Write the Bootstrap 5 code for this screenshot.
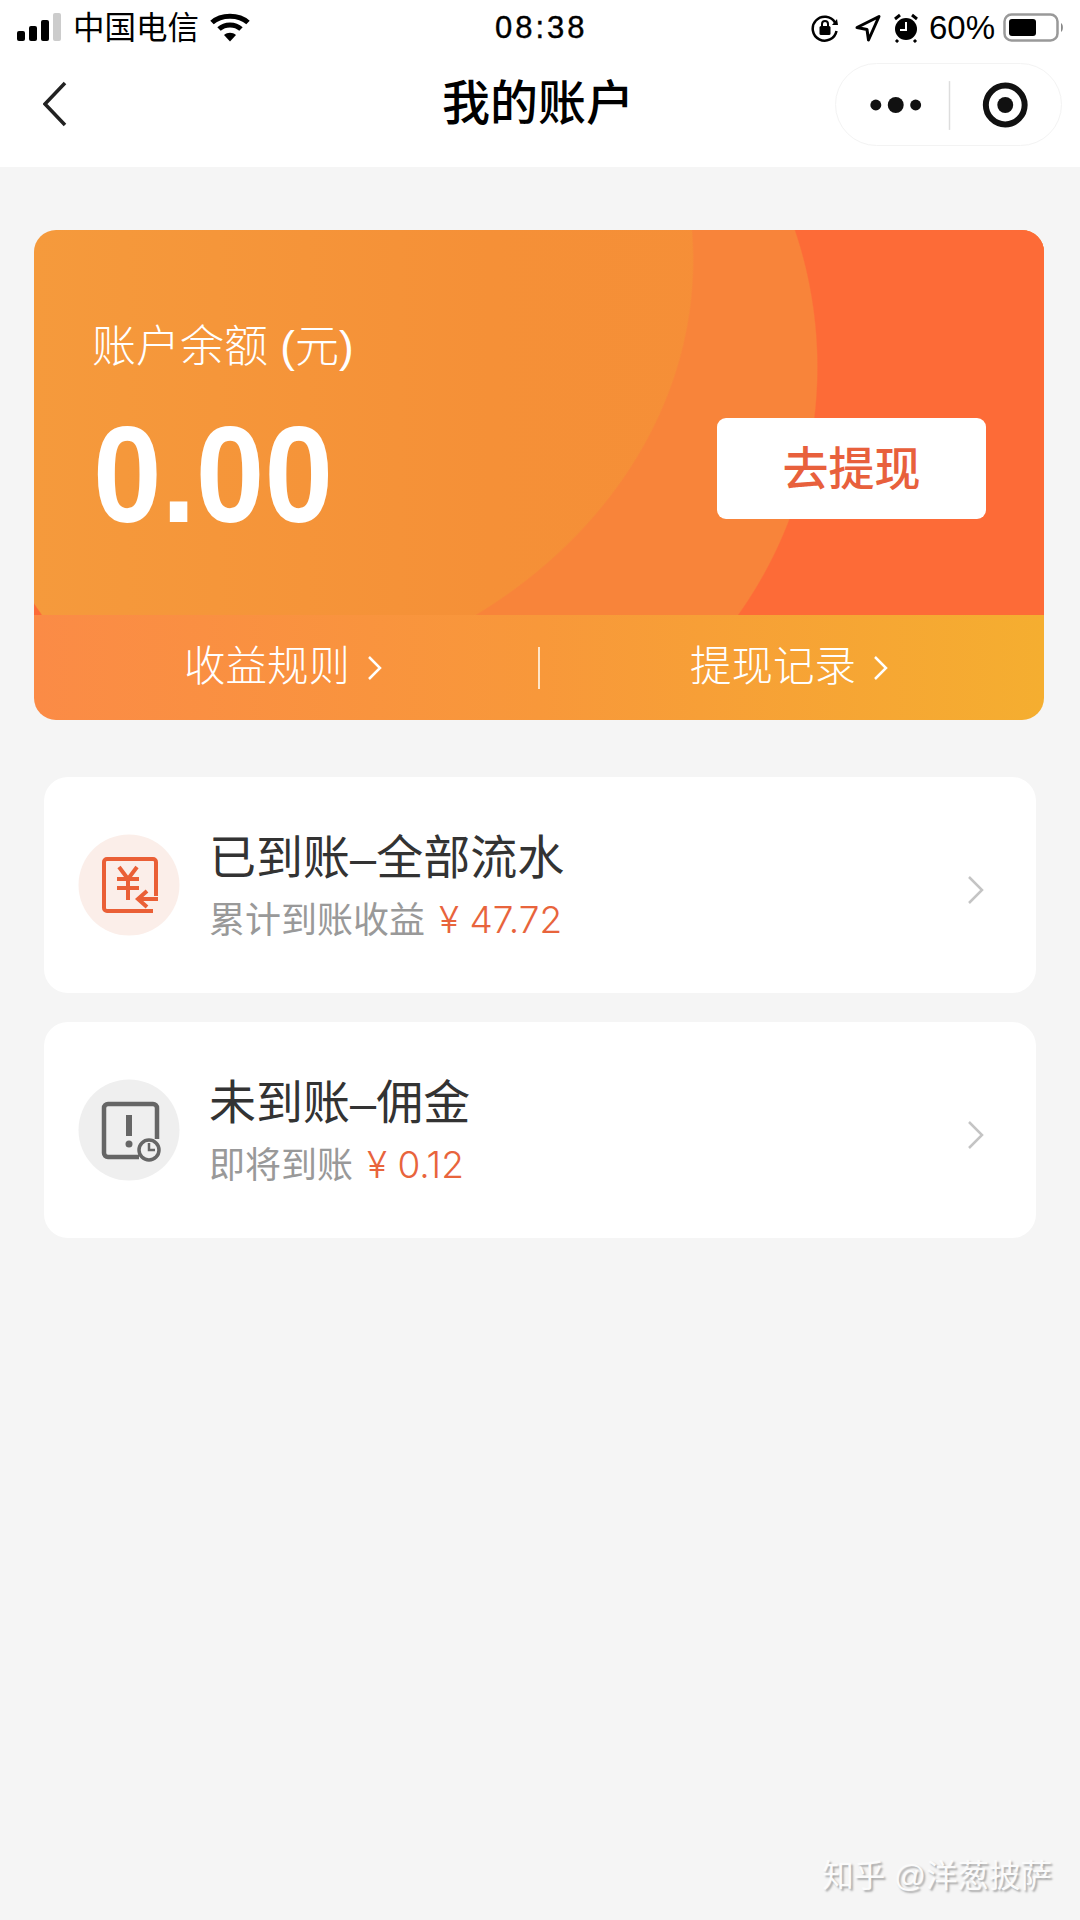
<!DOCTYPE html>
<html lang="zh">
  <head>
    <meta charset="UTF-8" />
    <meta name="viewport" content="width=device-width, initial-scale=1.0" />
    <title>我的账户</title>
    <link
      rel="stylesheet"
      href="https://cdn.jsdelivr.net/npm/bootstrap@5.3.0/dist/css/bootstrap.min.css"
    />
    <style>
      body {
        font-family: "Liberation Sans", "Noto Sans CJK SC", sans-serif;
        background-color: #f5f5f5;
        color: #333;
      }
      .page-wrap {
        width: 1080px;
        height: 1920px;
        overflow: hidden;
      }
      .top-area {
        height: 167px;
        background: #fff;
        color: #000;
      }
      .status-bar {
        height: 56px;
        padding: 0 15px 0 17px;
        font-size: 31px;
        line-height: 56px;
      }
      .status-time {
        width: 92px;
        font-size: 31px;
        letter-spacing: 3px;
        font-weight: 500;
        -webkit-text-stroke: 0.4px #000;
      }
      .status-side {
        width: 400px;
      }
      .carrier-name {
        margin-left: 11px;
        font-size: 31.500px;
      }
      .wifi-mark {
        margin-left: 11px;
      }
      .battery-text {
        margin-left: 10px;
        font-size: 33px;
      }
      .nav-row {
        height: 111px;
        padding: 7px 18px 22px 43px;
      }
      .nav-title {
        font-size: 48px;
        line-height: 82px;
        font-weight: 500;
      }
      .capsule {
        width: 227px;
        height: 83px;
        border: 1px solid #f3f3f3;
        border-radius: 42px;
      }
      .nav-left {
        width: 399px;
      }
      .nav-right {
        width: 428px;
      }
      .balance-card {
        width: 1010px;
        height: 490px;
        margin: 63px 0 0 34px;
        border-radius: 22px;
        overflow: hidden;
      }
      .balance-top {
        height: 385px;
        padding: 0 58px 0 58px;
        color: #fff;
        background:
          radial-gradient(circle 428px at 356px 137px, transparent 99.7%, #fd6b37 100%),
          radial-gradient(ellipse 530px 440px at 130px 30px, transparent 99.7%, #f8843a 100%),
          linear-gradient(90deg, #f59a3c, #f59037 45%, #f68d38);
      }
      .balance-label {
        font-size: 44px;
        line-height: 50px;
        font-weight: 300;
        padding-top: 92px;
      }
      .balance-num {
        font-size: 137px;
        line-height: 130px;
        font-weight: 700;
        margin-top: 38px;
        margin-left: 1px;
        transform: scaleX(0.9);
        transform-origin: left center;
      }
      .withdraw-btn {
        width: 269px;
        height: 101px;
        margin-top: 188px;
        border-radius: 9px;
        background: #fff;
        color: #e8603c;
        font-size: 46px;
        line-height: 103px;
        font-weight: 500;
        text-align: center;
      }
      .balance-links {
        height: 105px;
        color: #fff;
        font-size: 41.500px;
        font-weight: 300;
        background: linear-gradient(90deg, #fb8b46, #f8983a 50%, #f5ae30);
      }
      .link-half {
        width: 50%;
        gap: 17px;
        padding-right: 6px;
      }
      .link-sep {
        width: 2px;
        height: 42px;
        background: #ffe6c8;
        flex: none;
      }
      .flow-card {
        width: 992px;
        height: 216px;
        margin-left: 44px;
        padding: 0 52px 0 34px;
        background: #fff;
        border-radius: 24px;
      }
      .flow-first {
        margin-top: 57px;
      }
      .flow-second {
        margin-top: 29px;
      }
      .flow-icon {
        width: 102px;
        height: 102px;
        flex: none;
      }
      .flow-text {
        margin-left: 29px;
      }
      .flow-title {
        font-size: 47px;
        line-height: 56px;
        color: #333;
      }
      .flow-sub {
        font-size: 36px;
        line-height: 46px;
        color: #999;
        margin-top: 11px;
        margin-bottom: -4px;
      }
      .flow-amount {
        font-family: Inter, "Liberation Sans", sans-serif;
        font-size: 37px;
        font-weight: 300;
        color: #e8643c;
        margin-left: 14px;
      }
      .flow-arrow {
        margin-top: 10px;
      }
      .watermark {
        margin-top: auto;
        padding: 0 28px 26px 0;
        font-size: 31.500px;
        line-height: 36px;
        color: #fbfbfb;
        text-shadow: 2px 2px 2px #aaa;
      }
    </style>
  </head>
  <body class="m-0">
    <div class="page-wrap d-flex flex-column">
      <div class="top-area">
        <div class="status-bar d-flex justify-content-between align-items-center">
          <div class="status-side d-flex align-items-center">
            <svg width="45" height="30" viewBox="0 0 45 30">
              <rect x="0" y="18" width="8" height="10" rx="2" fill="#000" />
              <rect x="12" y="13" width="8" height="15" rx="2" fill="#000" />
              <rect x="24" y="7" width="8" height="21" rx="2" fill="#000" />
              <rect x="36" y="0" width="8" height="28" rx="2" fill="#ccc" />
            </svg>
            <span class="carrier-name">中国电信</span>
            <svg class="wifi-mark" width="40" height="30" viewBox="0 0 40 30">
              <path d="M2 9.500C11 1 29 1 38 9.500" fill="none" stroke="#000" stroke-width="5" />
              <path d="M9 16c6-5.500 16-5.500 22 0" fill="none" stroke="#000" stroke-width="5" />
              <path d="M14 22c3.500-3 8.500-3 12 0l-6 6.500z" fill="#000" />
            </svg>
          </div>
          <div class="status-time text-center">08:38</div>
          <div class="status-side d-flex align-items-center justify-content-end">
            <svg width="28" height="30" viewBox="0 0 28 30">
              <path d="M24 9.500A12 12 0 1 0 25.500 18" fill="none" stroke="#000" stroke-width="2.500" />
              <path d="M21 12l6 0-1-6z" fill="#000" />
              <rect x="8.500" y="13" width="11" height="9" rx="1.500" fill="#000" />
              <path d="M11 13v-2a3 3 0 0 1 6 0v2" fill="none" stroke="#000" stroke-width="2" />
            </svg>
            <svg class="ms-3" width="26" height="30" viewBox="0 0 26 30">
              <path d="M24 3.500L13.500 27l-1.500-10.500L2 14.500z" fill="none" stroke="#000" stroke-width="3" stroke-linejoin="round" />
            </svg>
            <svg class="ms-2 ps-1" width="30" height="30" viewBox="0 0 26 30">
              <circle cx="13" cy="16" r="11" fill="#000" />
              <path d="M13 9v8H7" fill="none" stroke="#fff" stroke-width="2" />
              <path d="M2 6l5-4M24 6l-5-4M5 27l-2 2M21 27l2 2" stroke="#000" stroke-width="3" />
            </svg>
            <span class="battery-text">60%</span>
            <svg class="ms-2" width="62" height="30" viewBox="0 0 62 30">
              <rect x="1.500" y="1.500" width="53" height="26" rx="7" fill="none" stroke="#999" stroke-width="2.500" />
              <rect x="6" y="6" width="27" height="17" rx="3" fill="#000" />
              <path d="M58 10c2.500 1 2.500 8 0 9z" fill="#888" />
            </svg>
          </div>
        </div>
        <div class="nav-row d-flex justify-content-between align-items-center">
          <div class="nav-left">
            <svg class="d-block" width="24" height="46" viewBox="0 0 24 46">
              <path d="M22 2L2 23l20 21" fill="none" stroke="#222" stroke-width="3.500" />
            </svg>
          </div>
          <div class="nav-title">我的账户</div>
          <div class="nav-right d-flex justify-content-end">
            <div class="capsule d-flex align-items-center">
              <svg width="226" height="81" viewBox="0 0 226 81">
                <circle cx="40" cy="41" r="5.500" fill="#111" />
                <circle cx="60" cy="41" r="8" fill="#111" />
                <circle cx="80" cy="41" r="5.500" fill="#111" />
                <path d="M114 17v49" stroke="#ddd" stroke-width="1.500" />
                <circle cx="170" cy="41" r="19.500" fill="none" stroke="#111" stroke-width="6" />
                <circle cx="170" cy="41" r="8" fill="#111" />
              </svg>
            </div>
          </div>
        </div>
      </div>

      <div class="balance-card">
        <div class="balance-top d-flex justify-content-between">
          <div>
            <div class="balance-label">账户余额 (元)</div>
            <div class="balance-num">0.00</div>
          </div>
          <div class="withdraw-btn">去提现</div>
        </div>
        <div class="balance-links d-flex align-items-center">
          <div class="link-half d-flex justify-content-center align-items-center">
            收益规则
            <svg width="15" height="24" viewBox="0 0 15 24">
              <path d="M2 1l11 11L2 23" fill="none" stroke="#fff" stroke-width="2.500" />
            </svg>
          </div>
          <div class="link-sep"></div>
          <div class="link-half d-flex justify-content-center align-items-center">
            提现记录
            <svg width="15" height="24" viewBox="0 0 15 24">
              <path d="M2 1l11 11L2 23" fill="none" stroke="#fff" stroke-width="2.500" />
            </svg>
          </div>
        </div>
      </div>

      <div class="flow-card flow-first d-flex align-items-center justify-content-between">
        <div class="d-flex align-items-center">
          <svg class="flow-icon" viewBox="0 0 102 102">
            <circle cx="51" cy="51" r="50.500" fill="#fbeee9" />
            <path d="M75 77H29a3 3 0 0 1-3-3V28a3 3 0 0 1 3-3h46a3 3 0 0 1 3 3v34" fill="none" stroke="#ea5f36" stroke-width="4" />
            <path d="M41 33l9 12 9-12M39 45h22M39 54h22M50 45v21" fill="none" stroke="#ea5f36" stroke-width="4" />
            <path d="M80 65H60M69 57l-9 8 9 8" fill="none" stroke="#ea5f36" stroke-width="4" />
          </svg>
          <div class="flow-text">
            <div class="flow-title">已到账–全部流水</div>
            <div class="flow-sub">累计到账收益<span class="flow-amount">¥ 47.72</span></div>
          </div>
        </div>
        <svg class="flow-arrow" width="17" height="30" viewBox="0 0 17 30">
          <path d="M2 2l13 13L2 28" fill="none" stroke="#c4c4c4" stroke-width="2.500" />
        </svg>
      </div>

      <div class="flow-card flow-second d-flex align-items-center justify-content-between">
        <div class="d-flex align-items-center">
          <svg class="flow-icon" viewBox="0 0 102 102">
            <circle cx="51" cy="51" r="50.500" fill="#efefef" />
            <path d="M61 78H30a4 4 0 0 1-4-4V29a4 4 0 0 1 4-4h45a4 4 0 0 1 4 4v31" fill="none" stroke="#666" stroke-width="4.500" />
            <path d="M51 36v21" stroke="#666" stroke-width="6" />
            <circle cx="51" cy="65" r="3.500" fill="#666" />
            <circle cx="71" cy="71" r="10" fill="none" stroke="#666" stroke-width="3.500" />
            <path d="M71 64v7h6" fill="none" stroke="#666" stroke-width="2.500" />
          </svg>
          <div class="flow-text">
            <div class="flow-title">未到账–佣金</div>
            <div class="flow-sub">即将到账<span class="flow-amount">¥ 0.12</span></div>
          </div>
        </div>
        <svg class="flow-arrow" width="17" height="30" viewBox="0 0 17 30">
          <path d="M2 2l13 13L2 28" fill="none" stroke="#c4c4c4" stroke-width="2.500" />
        </svg>
      </div>

      <div class="watermark text-end">知乎 @洋葱披萨</div>
    </div>
    <script src="https://cdn.jsdelivr.net/npm/bootstrap@5.3.0/dist/js/bootstrap.bundle.min.js"></script>
  </body>
</html>
